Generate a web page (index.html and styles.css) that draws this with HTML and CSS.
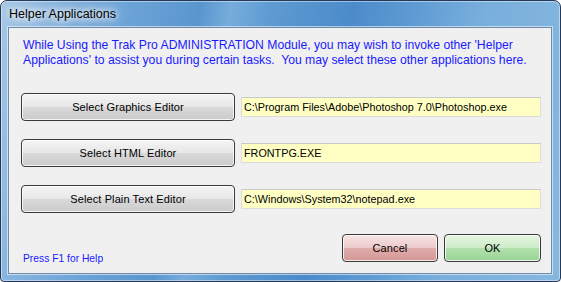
FILE: index.html
```html
<html>
  <head>
    <meta name="viewport" content="width=device-width, initial-scale=1"/>
    <link rel="stylesheet" href="styles.css">
  </head>
  <body>
    <div class="window">
      <div class="titlebar">
        <span class="title">Helper Applications</span>
      </div>
      <div class="client">
        <p class="intro">While Using the Trak Pro ADMINISTRATION Module, you may wish to invoke other 'Helper Applications' to assist you during certain tasks.&nbsp; You may select these other applications here.</p>

        <div class="rows">
          <div class="row">
            <button class="btn select-btn">Select Graphics Editor</button>
            <input type="text" class="path" value="C:\Program Files\Adobe\Photoshop 7.0\Photoshop.exe">
          </div>
          <div class="row">
            <button class="btn select-btn">Select HTML Editor</button>
            <input type="text" class="path" value="FRONTPG.EXE">
          </div>
          <div class="row">
            <button class="btn select-btn">Select Plain Text Editor</button>
            <input type="text" class="path" value="C:\Windows\System32\notepad.exe">
          </div>
        </div>

        <div class="footer">
          <span class="help">Press F1 for Help</span>
          <div class="actions">
            <button class="btn cancel-btn">Cancel</button>
            <button class="btn ok-btn">OK</button>
          </div>
        </div>
      </div>
    </div>
  </body>
</html>
```

FILE: styles.css
```css
body {
  margin: 0;
  font-family: "Liberation Sans", Arial, sans-serif;
  font-size: 11px;
  background: #ffffff;
}

.window {
  width: 561px;
  height: 282px;
  box-sizing: border-box;
  border: 1px solid #24395a;
  border-radius: 7px 7px 4px 4px;
  padding: 0 8px 7px 7px;
  display: flex;
  flex-direction: column;
  box-shadow: inset 0 0 0 1px rgba(255,255,255,.45);
  background: linear-gradient(100deg, #a7c7e5 0%, #84b3dd 10%, #6aa2d6 22%, #5a96ce 33%, #76acdc 38%, #5d9ad1 45%, #4c8bcb 58%, #5e9bd3 68%, #79afdc 80%, #86b7df 100%);
}

.titlebar {
  height: 26px;
  flex-shrink: 0;
  display: flex;
  align-items: center;
}

.title {
  font-family: "Liberation Sans", Arial, sans-serif;
  font-size: 12.5px;
  line-height: 16px;
  color: #000;
  padding-left: 1px;
  text-shadow: 0 0 6px #fff, 0 0 10px #fff, 0 0 14px rgba(255,255,255,.8);
}

.client {
  flex: 1;
  min-height: 0;
  background: #f0f0f0;
  border: 1px solid #6f8aa8;
  box-shadow: 0 0 0 1px rgba(255,255,255,.55);
  padding: 10px 10px 11px 12px;
  display: flex;
  flex-direction: column;
}

.intro {
  margin: 0 0 25px 2px;
  color: #1a1aff;
  font-size: 12.2px;
  line-height: 15px;
  width: 512px;
}

.rows {
  display: flex;
  flex-direction: column;
  gap: 18px;
}

.row {
  display: flex;
  align-items: center;
  gap: 6px;
}

.btn {
  font-family: "Liberation Sans", Arial, sans-serif;
  font-size: 11px;
  letter-spacing: 0.1px;
  color: #000;
  height: 28px;
  border: 1px solid #3a3a3a;
  border-radius: 4px;
  box-shadow: inset 0 0 0 1px rgba(255,255,255,.8);
  background: linear-gradient(#f5f5f5, #e6e6e6 50%, #d9d9d9 51%, #cbcbcb);
  padding: 0;
}

.select-btn {
  width: 214px;
}

.path {
  width: 300px;
  height: 20px;
  box-sizing: border-box;
  border: 1px solid #dcdcdc;
  border-top-color: #c9c9c9;
  background: #ffffc4;
  font-family: "Liberation Sans", Arial, sans-serif;
  font-size: 10.8px;
  color: #000;
  padding: 0 2px;
}

.footer {
  margin-top: 21px;
  display: flex;
  justify-content: space-between;
  align-items: flex-end;
}

.help {
  color: #1a1aff;
  font-size: 10.3px;
  margin: 0 0 -4px 2px;
  line-height: 15px;
}

.actions {
  display: flex;
  gap: 6px;
}

.cancel-btn {
  width: 96px;
  background: linear-gradient(#f7e4e4, #eccaca 50%, #e0acac 51%, #d49696);
}

.ok-btn {
  width: 97px;
  background: linear-gradient(#e6f6e2, #cdebc8 50%, #b2e0ad 51%, #98d493);
}
```
